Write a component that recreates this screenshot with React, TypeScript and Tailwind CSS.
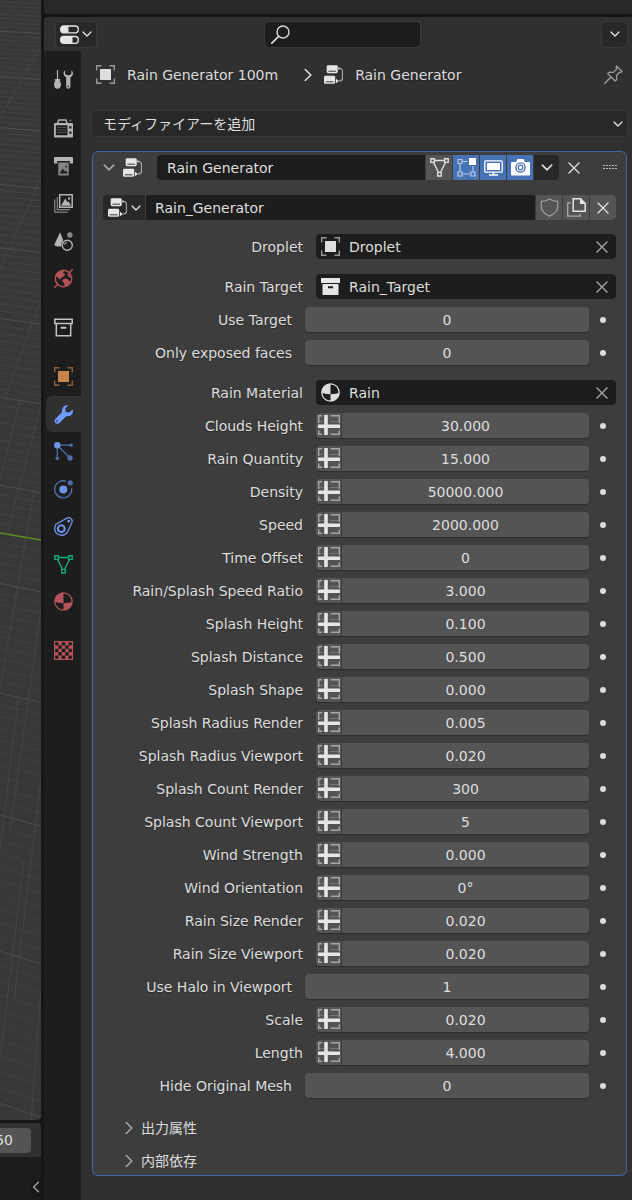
import React, { useId, useState } from 'react';

type IconProps = { className?: string };

const Icon: React.FC<IconProps & { children: React.ReactNode }> = ({ className = '', children }) => (
  <svg viewBox="0 0 19 19" fill="none" aria-hidden="true" className={`h-[19px] w-[19px] shrink-0 ${className}`}>
    {children}
  </svg>
);

const ChevronDown: React.FC<IconProps> = ({ className = '' }) => (
  <svg viewBox="0 0 10 6" fill="none" aria-hidden="true" className={`shrink-0 ${className}`}>
    <path d="M1 1l4 4 4-4" stroke="currentColor" strokeWidth="1.4" strokeLinecap="round" />
  </svg>
);

const ChevronRight: React.FC<IconProps> = ({ className = '' }) => (
  <svg viewBox="0 0 8 14" fill="none" aria-hidden="true" className={`shrink-0 ${className}`}>
    <path d="M1.2 1.5L6.8 7l-5.6 5.5" stroke="currentColor" strokeWidth="1.5" strokeLinecap="round" />
  </svg>
);

const CloseIcon: React.FC<IconProps> = ({ className = '' }) => (
  <svg viewBox="0 0 12 12" fill="none" aria-hidden="true" className={`h-3 w-3 shrink-0 ${className}`}>
    <path d="M1 1l10 10M11 1L1 11" stroke="currentColor" strokeWidth="1.4" strokeLinecap="round" />
  </svg>
);

const NodesIcon: React.FC<IconProps> = ({ className }) => (
  <Icon className={className}>
    <rect x="2.7" y="0.2" width="11" height="8" rx="1.4" fill="#e6e6e6" />
    <rect x="0" y="10.8" width="11.2" height="8" rx="1.4" fill="#e6e6e6" />
    <path d="M4.4 6.2h7.6M1.7 16.8h7.8" stroke="#3a3a3a" strokeWidth="1" />
    <path d="M15.500 3.200c2.200.3 3 1.500 3 3.300v6.500c0 1.900-1 3-3.800 3" stroke="#a8a8a8" strokeWidth="1.200" />
    <path d="M14.300 2l1.900 1.500-1.900 1.500zM12 13.800l2.900 2.200-2.900 2.200z" fill="#e6e6e6" />
  </Icon>
);

const ObjectIcon: React.FC<IconProps & { frame?: string }> = ({ className, frame = '#999' }) => (
  <Icon className={className}>
    <rect x="4" y="4" width="11" height="11" fill="currentColor" />
    <path d="M.7 5.500V.7h4.800M13.500.7h4.800v4.800M18.300 13.500v4.800h-4.800M5.500 18.300H.7v-4.800" stroke={frame} strokeWidth="1.4" />
  </Icon>
);

const MaterialIcon: React.FC<IconProps> = ({ className }) => (
  <Icon className={className}>
    <circle cx="9.500" cy="9.500" r="8.700" stroke="currentColor" strokeWidth="1.300" />
    <path d="M9.500.8v10.400C6 11.200 2.500 10.500.8 9.500A8.700 8.700 0 0 1 9.500.8z" fill="currentColor" />
    <path d="M9.500 18.200v-7c3.500 0 7-.7 8.700-1.700a8.700 8.700 0 0 1-8.700 8.700z" fill="currentColor" />
  </Icon>
);

const MeshIcon: React.FC<IconProps> = ({ className }) => (
  <Icon className={className}>
    <path d="M4.500 2.500h10M3.600 4.600l4.700 9.400M15.400 4.600l-4.700 9.400" stroke="currentColor" strokeWidth="1.400" />
    <path d="M.8.800h3.600v3.600H.8zM14.600.800h3.600v3.600h-3.600zM7.700 14.400h3.600V18H7.700z" stroke="currentColor" strokeWidth="1.400" />
  </Icon>
);

const EditModeIcon = () => (
  <Icon>
    <path d="M5.500 3.500h5M3 6v7.500M5.500 16h7.500M16 8v5.500" stroke="#b9cbe8" strokeWidth="1.200" />
    <path d="M1 1.500h4v4H1zM1 14h4v4H1zM14 14h4v4h-4z" stroke="#b9cbe8" strokeWidth="1.200" />
    <rect x="12" y="0" width="7" height="7" fill="#fff" />
  </Icon>
);

const MonitorIcon = () => (
  <Icon>
    <rect x=".8" y="2.800" width="17.400" height="11.400" rx="1" stroke="#fff" strokeWidth="1.300" />
    <rect x="3" y="5" width="13" height="7" fill="#fff" />
    <path d="M9.500 14v2.500M5 17h9" stroke="#fff" strokeWidth="1.600" />
  </Icon>
);

const PhotoIcon = () => (
  <Icon>
    <path d="M1 4h4l1.500-3h6L14 4h4a1 1 0 0 1 1 1v11.500a1 1 0 0 1-1 1H1a1 1 0 0 1-1-1V5a1 1 0 0 1 1-1z" fill="#fff" />
    <circle cx="9.500" cy="9.500" r="4.600" stroke="#4772b3" strokeWidth="1.400" />
    <circle cx="9.500" cy="9.500" r="2.300" stroke="#4772b3" strokeWidth="1.200" />
  </Icon>
);

const ShieldIcon = () => (
  <Icon className="text-[#a0a0a0]">
    <path d="M9.500.9c2.500 1.600 5.300 2.300 8.200 2.400v5.500c0 4-3.200 7-8.200 9.400C4.500 15.800 1.300 12.800 1.300 8.800V3.300C4.200 3.200 7 2.500 9.500.9z" stroke="currentColor" strokeWidth="1.200" />
  </Icon>
);

const CopyIcon = () => (
  <Icon>
    <path d="M6.200.8h7.300l4.700 4.700v7.700h-12z" stroke="#e6e6e6" strokeWidth="1.500" />
    <path d="M13 .3l5.700 5.700H13z" fill="#e6e6e6" />
    <path d="M3.500 5H.7v13.200h12.600v-2.500" stroke="#a8a8a8" strokeWidth="1.300" />
  </Icon>
);

const ArchiveSolidIcon = () => (
  <Icon>
    <path d="M0 1h19v5H0z" fill="#e6e6e6" />
    <path fillRule="evenodd" d="M1.500 7h16v11h-16zM7 9.300v1.900h5V9.300z" fill="#e6e6e6" />
  </Icon>
);

const AttributeIcon = () => (
  <svg viewBox="0 0 22 20" fill="none" aria-hidden="true" className="mb-px h-5 w-[22px]">
    <path d="M.7 8V.7H4M12.500.7h8.800V8M21.300 15.500v3.800h-8.800M4 19.300H.7v-3.800" stroke="#a6a6a6" strokeWidth="1.400" />
    <path d="M1 6.500h4M12 6.500h9" stroke="#8a8a8a" strokeWidth=".6" />
    <path d="M8 0v20M0 11.200h22" stroke="#e6e6e6" strokeWidth="3.600" />
  </svg>
);

const PinIcon = () => (
  <Icon className="text-[#9a9a9a]">
    <path d="M12.500 1l5.500 5.500-1.300 1-1.200-.3-3 3.300.3 4-1.700 1.500-7.300-7.300 1.600-1.600 3.900.3 3.300-3.100-.4-1.200z" stroke="currentColor" strokeWidth="1.300" strokeLinejoin="round" />
    <path d="M6.500 12.500L.8 18.200" stroke="currentColor" strokeWidth="1.400" strokeLinecap="round" />
  </Icon>
);

const PropertiesIcon = () => (
  <Icon>
    <rect x=".7" y="1" width="17.600" height="6.800" rx="3" stroke="#e6e6e6" strokeWidth="1.300" />
    <path d="M3 1h5.500v6.800H3a2.500 2.500 0 0 1-2.300-3.400A2.500 2.500 0 0 1 3 1z" fill="#e6e6e6" />
    <rect x=".7" y="11.500" width="17.600" height="6.800" rx="3" stroke="#e6e6e6" strokeWidth="1.300" />
    <path d="M3 11.500h9.500v6.800H3a2.500 2.500 0 0 1-2.300-3.400A2.500 2.500 0 0 1 3 11.500z" fill="#e6e6e6" />
  </Icon>
);

const SearchIcon = () => (
  <Icon className="text-[#d8d8d8]">
    <circle cx="12" cy="7" r="6" stroke="currentColor" strokeWidth="1.400" />
    <path d="M7.700 11.300L.8 18.200" stroke="currentColor" strokeWidth="1.700" strokeLinecap="round" />
  </Icon>
);

const ToolIcon = () => (
  <Icon className="text-[#b4b4b4]">
    <path d="M3.500 0v9" stroke="currentColor" strokeWidth="1.200" />
    <path d="M.8 9h5.400v1.800H5.300c1.500 1.200 1.900 3 1.500 5-.3 1.900-1.400 3-3.300 3s-3-1.100-3.300-3c-.4-2 0-3.800 1.500-5H.8z" fill="currentColor" />
    <path d="M11 .2v3.600l2 1.400h2.400l2-1.400V.2c1.300 1 1.800 2.600 1.400 4.100-.3 1.400-1.200 2.400-2.400 3v9.400a2 2 0 0 1-4.200 0V7.300c-1.300-.6-2.200-1.600-2.500-3C9.300 2.800 9.800 1.200 11 .2z" fill="currentColor" />
    <circle cx="14.300" cy="16.400" r=".8" fill="#1d1d1d" />
  </Icon>
);

const RenderIcon = () => (
  <Icon className="text-[#b4b4b4]">
    <path d="M3.500 4l1.300-3h7l1.300 3" stroke="currentColor" strokeWidth="1.500" />
    <path fillRule="evenodd" d="M1 4h17a1 1 0 0 1 1 1v12.500a1 1 0 0 1-1 1H1a1 1 0 0 1-1-1V5a1 1 0 0 1 1-1zm.8 2.200v10h11.700v-10zm13.400 1v2.300h2.300V7.200zm0 5.300v2.300h2.300v-2.300z" fill="currentColor" />
    <path d="M3 8.500h9.500M3 11h9.500M3 13.500h9.500" stroke="#555" strokeWidth=".9" />
    <circle cx="16.400" cy="1.500" r="1" fill="#777" />
  </Icon>
);

const OutputIcon = () => (
  <Icon>
    <path d="M1 0h17a1 1 0 0 1 1 1v5.500h-3.200V4H3.200v2.500H0V1a1 1 0 0 1 1-1z" fill="#b4b4b4" />
    <path d="M4.300 5.500h10.400v13H4.300z" fill="#858585" />
    <path d="M5.500 16.500l3.200-5 2 3 1-1.200 2 3.200z" fill="#1d1d1d" />
    <circle cx="12" cy="9.500" r=".9" fill="#1d1d1d" />
  </Icon>
);

const ViewLayerIcon = () => (
  <Icon>
    <path d="M5.700.8h12.500v12.500H5.700z" stroke="#b4b4b4" strokeWidth="1.500" />
    <path d="M7 11.800l4.300-7.300 2.200 4 1-1.200 2.700 4.500z" fill="#b4b4b4" />
    <circle cx="15" cy="4.500" r="1.200" fill="#b4b4b4" />
    <path d="M3.300 3v12.700H16M.8 5.500v12.700h12.700" stroke="#858585" strokeWidth="1.200" />
  </Icon>
);

const SceneIcon = () => (
  <Icon>
    <path d="M6 .3c1.300 3 2.600 6.500 3.300 8.200-1.600 1.500-2.300 3.400-1.900 6-2.900.3-5.600-.2-7.200-1.500C1.800 9.500 4.500 3.800 6 .3z" fill="#b4b4b4" />
    <circle cx="15.900" cy="3" r="2.700" fill="#8a8a8a" />
    <circle cx="13.300" cy="13.300" r="5" stroke="#b4b4b4" strokeWidth="1.400" />
    <path d="M10.600 12.800a2.700 2.700 0 0 1 2.200-2.300" stroke="#b4b4b4" strokeWidth="1.100" />
  </Icon>
);

const WorldIcon = () => (
  <Icon className="text-[#b5535b]">
    <circle cx="9.500" cy="9.500" r="8.300" stroke="currentColor" strokeWidth="1.400" />
    <path d="M3 4.500c2-2 4.500-2.800 7-2.500L9 4l2 1-1 2.500-2.500 1L6 10.500 3.800 8.500 2 8zM10 9.500l3.500.5 2.500 2.500-2 3.500-3 1.500-1-3.500-2-2z" fill="currentColor" />
    <path d="M13 4l2.500 1.500L17 9l-2.500-1z" fill="currentColor" />
    <path d="M15.500 3.500L18.700.3M3.500 15.500L.3 18.700" stroke="currentColor" strokeWidth="1.500" />
  </Icon>
);

const CollectionIcon = () => (
  <Icon className="text-[#c4c4c4]">
    <path d="M.8 1.300h17.400v4.200H.8zM2.300 5.800v12h14.400v-12" stroke="currentColor" strokeWidth="1.500" />
    <path d="M7.500 9.700h4" stroke="currentColor" strokeWidth="2" strokeLinecap="round" />
  </Icon>
);

const WrenchIcon = () => (
  <Icon className="text-[#6f9bff]">
    <path d="M12.800.3c.5-.1 1 0 1.200.2l-2.700 2.900.4 3.600 3.600.4L18.500 4.600c.5.900.5 2.200.2 3.200-.8 2.700-3.600 3.900-6.200 3.200l-7.200 7c-1.100 1-2.900 1-4 0s-1.200-2.900 0-4L8.200 7C7.400 4 9.300.800 12.800.3z" fill="currentColor" />
    <circle cx="3.200" cy="15.900" r=".9" fill="#303030" />
  </Icon>
);

const ParticlesIcon = () => (
  <Icon>
    <path d="M6 3.200h12M3.300 6v11M5.500 5.500l10 10" stroke="#4f6cab" strokeWidth="1.300" />
    <circle cx="3.300" cy="3.200" r="3.200" fill="#6e94ea" />
    <circle cx="17.200" cy="3.200" r="1.800" fill="#4f6cab" />
    <circle cx="3.300" cy="16.500" r="1.800" fill="#4f6cab" />
    <circle cx="16" cy="16" r="2.700" fill="#4f6cab" />
  </Icon>
);

const PhysicsIcon = () => (
  <Icon>
    <path d="M12 1.300A8.500 8.500 0 1 0 17.600 8" stroke="#4f6cab" strokeWidth="1.400" />
    <circle cx="9.300" cy="9.500" r="4" fill="#6e94ea" />
    <circle cx="16.300" cy="2.800" r="2.600" fill="#4f6cab" />
  </Icon>
);

const ConstraintIcon = () => (
  <Icon className="text-[#6e94ea]">
    <path d="M2 7.300L12.900 1.100c3.300-1.500 6.200 1.300 4.900 4.600l-4.200 9.200c-3.500 5.300-11.400 3.900-12.700-1.700-.5-2.200-.1-4.300 1.100-5.900z" stroke="currentColor" strokeWidth="1.300" />
    <circle cx="7.300" cy="11.700" r="3.400" stroke="currentColor" strokeWidth="2" />
    <circle cx="14.700" cy="4.200" r="1.400" fill="currentColor" />
  </Icon>
);

const TextureIcon = () => (
  <Icon className="text-[#b5535b]">
    <rect x=".6" y=".6" width="17.800" height="17.800" stroke="currentColor" strokeWidth="1.200" />
    {[0, 1, 2, 3, 4].map((r) =>
      [0, 1, 2, 3, 4].map((c) =>
        (r + c) % 2 === 1 ? (
          <rect key={`${r}-${c}`} x={1 + c * 3.4} y={1 + r * 3.4} width="3.400" height="3.400" fill="currentColor" />
        ) : null
      )
    )}
  </Icon>
);

const tabGroups: { name: string; icon: React.ReactNode }[][] = [
  [{ name: 'Tool', icon: <ToolIcon /> }],
  [
    { name: 'Render', icon: <RenderIcon /> },
    { name: 'Output', icon: <OutputIcon /> },
    { name: 'View Layer', icon: <ViewLayerIcon /> },
    { name: 'Scene', icon: <SceneIcon /> },
    { name: 'World', icon: <WorldIcon /> },
  ],
  [{ name: 'Collection', icon: <CollectionIcon /> }],
  [
    { name: 'Object', icon: <ObjectIcon className="text-[#c7844b]" frame="#8a5f3c" /> },
    { name: 'Modifiers', icon: <WrenchIcon /> },
    { name: 'Particles', icon: <ParticlesIcon /> },
    { name: 'Physics', icon: <PhysicsIcon /> },
    { name: 'Constraints', icon: <ConstraintIcon /> },
    { name: 'Data', icon: <MeshIcon className="text-[#12a878]" /> },
    { name: 'Material', icon: <MaterialIcon className="text-[#b5535b]" /> },
  ],
  [{ name: 'Texture', icon: <TextureIcon /> }],
];

type Param = { label: string; value: string; plain?: boolean };

const targetParams: Param[] = [
  { label: 'Use Target', value: '0', plain: true },
  { label: 'Only exposed faces', value: '0', plain: true },
];

const rainParams: Param[] = [
  { label: 'Clouds Height', value: '30.000' },
  { label: 'Rain Quantity', value: '15.000' },
  { label: 'Density', value: '50000.000' },
  { label: 'Speed', value: '2000.000' },
  { label: 'Time Offset', value: '0' },
  { label: 'Rain/Splash Speed Ratio', value: '3.000' },
  { label: 'Splash Height', value: '0.100' },
  { label: 'Splash Distance', value: '0.500' },
  { label: 'Splash Shape', value: '0.000' },
  { label: 'Splash Radius Render', value: '0.005' },
  { label: 'Splash Radius Viewport', value: '0.020' },
  { label: 'Splash Count Render', value: '300' },
  { label: 'Splash Count Viewport', value: '5' },
  { label: 'Wind Strength', value: '0.000' },
  { label: 'Wind Orientation', value: '0°' },
  { label: 'Rain Size Render', value: '0.020' },
  { label: 'Rain Size Viewport', value: '0.020' },
  { label: 'Use Halo in Viewport', value: '1', plain: true },
  { label: 'Scale', value: '0.020' },
  { label: 'Length', value: '4.000' },
  { label: 'Hide Original Mesh', value: '0', plain: true },
];

const ParamRow: React.FC<Param> = ({ label, value, plain }) => {
  const id = useId();
  return (
    <div className="flex h-[25px] items-center">
      <label htmlFor={id} className={`shrink-0 pr-[13px] text-right whitespace-nowrap ${plain ? 'w-[202px]' : 'w-[213px]'}`}>
        {label}
      </label>
      <div className="flex h-full min-w-0 flex-1 gap-px overflow-hidden rounded shadow-[0_1px_1px_#2c2c2c]">
        {!plain && (
          <button type="button" aria-label={`${label} attribute`} className="flex w-[25px] shrink-0 items-center justify-center bg-[#545454]">
            <AttributeIcon />
          </button>
        )}
        <input id={id} defaultValue={value} className="h-full w-full min-w-0 bg-[#545454] text-center outline-none" />
      </div>
      <button type="button" aria-label={`Animate ${label}`} className="flex h-full w-7 shrink-0 items-center justify-center -mr-px">
        <span className="h-1.5 w-1.5 rounded-full bg-[#dcdcdc]" />
      </button>
    </div>
  );
};

const DataRow: React.FC<{ label: string; value: string; icon: React.ReactNode }> = ({ label, value, icon }) => {
  const id = useId();
  return (
    <div className="flex h-[25px] items-center">
      <label htmlFor={id} className="w-[213px] shrink-0 pr-[13px] text-right whitespace-nowrap">{label}</label>
      <div className="flex h-full min-w-0 flex-1 items-center rounded bg-[#1d1d1d] pl-[5px]">
        {icon}
        <input id={id} defaultValue={value} className="h-full min-w-0 flex-1 bg-transparent pl-[9px] outline-none" />
        <button type="button" aria-label={`Clear ${label}`} className="flex h-full w-[29px] items-center justify-center text-[#a8a8a8]">
          <CloseIcon />
        </button>
      </div>
    </div>
  );
};

// perspective floor lines get wider apart towards the bottom
const floorLines: { y: number; drop: number }[] = [];
for (let y = -10; y < 1120; y += 4 + Math.max(0, y) * 0.011) {
  floorLines.push({ y, drop: 2 + Math.max(0, y) * 0.011 });
}

const depthLines = [
  [22, 0, 0, 20], [41, 45, 0, 118], [41, 178, 0, 268], [41, 300, 4, 400], [41, 405, 8, 530],
  [20, 400, 0, 480], [34, 490, 0, 690], [41, 610, 10, 830], [18, 700, 0, 850], [41, 780, 14, 1000],
  [24, 860, 0, 1060], [41, 990, 31, 1120],
];

const ViewportStrip = () => (
  <div className="flex w-[41px] shrink-0 flex-col gap-[3px]">
    <div className="min-h-0 flex-1 overflow-hidden rounded-br bg-[#383838]">
      <svg viewBox="0 0 41 1120" preserveAspectRatio="xMinYMin slice" aria-hidden="true" className="h-full w-full">
        {floorLines.map(({ y, drop }, i) => (
          <line key={i} x1="0" y1={y} x2="41" y2={y + drop} stroke={i % 10 === 0 ? '#4e4e4e' : '#414141'} />
        ))}
        {depthLines.map(([x1, y1, x2, y2], i) => (
          <line key={i} x1={x1} y1={y1} x2={x2} y2={y2} stroke="#454545" />
        ))}
        <line x1="0" y1="533" x2="41" y2="540" stroke="#5f8a22" strokeWidth="1.500" />
      </svg>
    </div>
    <div className="overflow-hidden rounded-tr bg-[#1d1d1d]">
      <div className="flex h-[34px] items-center justify-end bg-[#303030] pr-2.5">
        <input aria-label="End frame" defaultValue="250" className="h-[25px] w-16 shrink-0 rounded bg-[#545454] pr-[18px] text-right outline-none" />
      </div>
      <div className="flex h-[43px] items-center justify-end pt-4">
        <button type="button" aria-label="Show sidebar" className="flex h-5 w-2.5 items-center justify-center rounded-l bg-[#181818] text-[#a8a8a8]">
          <ChevronRight className="h-3 w-2 rotate-180" />
        </button>
      </div>
    </div>
  </div>
);

const Header = () => (
  <header className="flex h-[34px] items-center bg-[#303030] pr-[5px] pl-3">
    <button type="button" aria-label="Editor type" className="flex h-[25px] w-10 items-center justify-center gap-[3px] rounded bg-[#282828] outline outline-[#383838]">
      <PropertiesIcon />
      <ChevronDown className="h-[6px] w-2.5" />
    </button>
    <div className="grow-13" />
    <div className="flex h-[25px] w-[155px] items-center rounded bg-[#1d1d1d] pl-1.5 outline outline-[#383838]">
      <SearchIcon />
      <input type="search" aria-label="Search" className="min-w-0 flex-1 bg-transparent pl-2 outline-none" />
    </div>
    <div className="grow-14" />
    <button type="button" aria-label="Options" className="flex h-[25px] w-[25px] items-center justify-center rounded bg-[#282828] outline outline-[#383838]">
      <ChevronDown className="h-[6px] w-2.5" />
    </button>
  </header>
);

const TabBar = () => {
  const [active, setActive] = useState('Modifiers');
  return (
    <nav className="w-[37px] shrink-0 bg-[#1d1d1d] pt-2.5 pl-0.5">
      {tabGroups.map((group, i) => (
        <div key={i} className="mb-1.5 border-b border-[#191919] pb-1.5 last:border-b-0">
          {group.map(({ name, icon }) => (
            <button
              key={name}
              type="button"
              aria-label={name}
              onClick={() => setActive(name)}
              className={`flex h-9 w-full items-center justify-center rounded-l-md not-last:odd:mb-0.5 not-last:even:mb-px ${active === name ? 'bg-[#303030]' : ''}`}
            >
              {icon}
            </button>
          ))}
        </div>
      ))}
    </nav>
  );
};

const ModifierPanel = () => (
  <section className="rounded-md border border-[#4068a6] bg-[#3d3d3d] px-2.5 pt-[3px] pb-0.5">
    <div className="-mr-px flex h-[25px] items-center">
      <button type="button" aria-label="Collapse" className="text-[#a8a8a8]">
        <ChevronDown className="h-[7px] w-3" />
      </button>
      <NodesIcon className="ml-2" />
      <div className="ml-[15px] flex h-full min-w-0 flex-1 gap-px overflow-hidden rounded">
        <input aria-label="Modifier name" defaultValue="Rain Generator" className="h-full min-w-0 flex-1 bg-[#1d1d1d] pl-2.5 outline-none" />
        <button type="button" aria-label="On cage" className="flex w-[26px] items-center justify-center bg-[#545454]"><MeshIcon /></button>
        <button type="button" aria-label="Edit mode" className="flex w-[26px] items-center justify-center bg-[#4772b3]"><EditModeIcon /></button>
        <button type="button" aria-label="Realtime" className="flex w-[26px] items-center justify-center bg-[#4772b3]"><MonitorIcon /></button>
        <button type="button" aria-label="Render" className="flex w-[26px] items-center justify-center bg-[#4772b3]"><PhotoIcon /></button>
        <button type="button" aria-label="More" className="flex w-[25px] items-center justify-center bg-[#282828]"><ChevronDown className="h-[7px] w-3" /></button>
      </div>
      <button type="button" aria-label="Remove modifier" className="flex h-full w-[30px] items-center justify-center">
        <CloseIcon />
      </button>
      <svg viewBox="0 0 14 6" aria-hidden="true" className="ml-3.5 h-[6px] w-3.5">
        {[0, 3, 6, 9, 12].map((x) => (
          <g key={x} fill="#bdbdbd">
            <rect x={x} y="0" width="2" height="1" />
            <rect x={x} y="3" width="2" height="1" />
          </g>
        ))}
      </svg>
    </div>

    <div className="mt-[15px] flex h-[25px] gap-px overflow-hidden rounded">
      <button type="button" aria-label="Browse node groups" className="flex w-[42px] items-center justify-center gap-1 bg-[#282828]">
        <NodesIcon />
        <ChevronDown className="h-[6px] w-2.5" />
      </button>
      <input aria-label="Node group" defaultValue="Rain_Generator" className="h-full min-w-0 flex-1 bg-[#1d1d1d] pl-[9px] outline-none" />
      <button type="button" aria-label="Fake user" className="flex w-[26px] items-center justify-center bg-[#545454]"><ShieldIcon /></button>
      <button type="button" aria-label="Duplicate" className="flex w-[26px] items-center justify-center bg-[#545454]"><CopyIcon /></button>
      <button type="button" aria-label="Unlink" className="flex w-[26px] items-center justify-center bg-[#545454]"><CloseIcon /></button>
    </div>

    <div className="mt-3.5 flex flex-col gap-[15px]">
      <DataRow label="Droplet" value="Droplet" icon={<ObjectIcon />} />
      <div className="flex flex-col gap-2">
        <DataRow label="Rain Target" value="Rain_Target" icon={<ArchiveSolidIcon />} />
        {targetParams.map((p) => <ParamRow key={p.label} {...p} />)}
      </div>
      <div className="flex flex-col gap-2">
        <DataRow label="Rain Material" value="Rain" icon={<MaterialIcon />} />
        {rainParams.map((p) => <ParamRow key={p.label} {...p} />)}
      </div>
    </div>

    <div className="mt-[17px] flex flex-col gap-2">
      {['出力属性', '内部依存'].map((title) => (
        <button key={title} type="button" className="flex h-[25px] items-center gap-2 pl-[22px] text-left">
          <ChevronRight className="h-[14px] w-2 text-[#a8a8a8]" />
          {title}
        </button>
      ))}
    </div>
  </section>
);

const App: React.FC = () => (
  <div className="flex min-h-screen gap-[3px] bg-[#161616] font-['DejaVu_Sans','Noto_Sans_CJK_JP',sans-serif] text-[14px] leading-5 text-[#dedede] [text-shadow:0_1px_1px_#0005]">
    <ViewportStrip />
    <div className="flex min-w-0 flex-1 flex-col gap-[3px]">
      <div className="h-3.5 rounded-bl bg-[#282828]" />
      <div className="flex flex-1 flex-col overflow-hidden rounded-tl">
        <Header />
        <div className="flex flex-1">
          <TabBar />
          <main className="min-w-0 flex-1 bg-[#303030] pt-[11px] pr-[5px] pb-6 pl-[11px]">
            <div className="flex h-[25px] items-center pr-1 pl-1">
              <ObjectIcon />
              <span className="ml-3 whitespace-nowrap">Rain Generator 100m</span>
              <ChevronRight className="ml-[26px] h-[14px] w-2" />
              <NodesIcon className="ml-3" />
              <span className="ml-3 whitespace-nowrap">Rain Generator</span>
              <button type="button" aria-label="Pin" className="ml-auto"><PinIcon /></button>
            </div>
            <div className="relative mt-6 mb-[15px] h-[25px]">
              <select aria-label="Add modifier" className="h-full w-full appearance-none rounded bg-[#282828] pl-[11px] outline outline-[#383838]">
                <option>モディファイアーを追加</option>
              </select>
              <ChevronDown className="pointer-events-none absolute top-2.5 right-1 h-[6px] w-2.5" />
            </div>
            <ModifierPanel />
          </main>
        </div>
      </div>
    </div>
  </div>
);

export default App;
